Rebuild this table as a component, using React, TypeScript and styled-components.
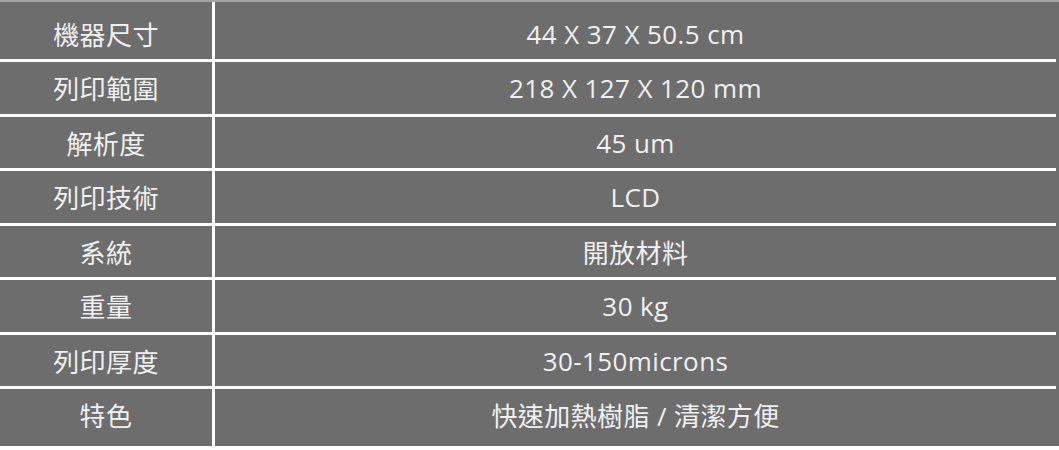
import React from "react";
import styled, { createGlobalStyle } from "styled-components";

const Global = createGlobalStyle`
  html, body { margin: 0; padding: 0; background: #ffffff; }
  body { font-family: "Open Sans", "Noto Sans CJK TC", sans-serif; }
`;

const Table = styled.div`
  display: flex;
  flex-direction: column;
  width: 1059px;
  box-sizing: border-box;
  background: #6d6d6d;
  border-top: 2px solid #a3a3a3;
  padding-right: 3px;
`;

const Row = styled.div<{ $h: number; $top: number; $bottom: number }>`
  display: grid;
  grid-template-columns: 212px 3px 1fr;
  height: ${(p) => p.$h}px;
  background: #6d6d6d;
  & > div:not(:nth-child(2)) {
    padding-top: ${(p) => p.$top}px;
    padding-bottom: ${(p) => p.$bottom}px;
  }
`;

const Separator = styled.div`
  height: 3px;
  background: #ffffff;
`;

const Divider = styled.div`
  background: #ffffff;
`;

const Cell = styled.div`
  display: flex;
  align-items: center;
  justify-content: center;
  color: #f0f0f0;
  font-size: 26px;
  letter-spacing: 0.4px;
  box-sizing: border-box;
  white-space: nowrap;
`;

const rows: [string, string][] = [
  ["機器尺寸", "44 X 37 X 50.5 cm"],
  ["列印範圍", "218 X 127 X 120 mm"],
  ["解析度", "45 um"],
  ["列印技術", "LCD"],
  ["系統", "開放材料"],
  ["重量", "30 kg"],
  ["列印厚度", "30-150microns"],
  ["特色", "快速加熱樹脂 / 清潔方便"],
];

const heights = [57, 52, 51, 52, 51, 52, 51, 57];
const tops = [7, 0, 0, 0, 0, 0, 0, 0];
const bottoms = [0, 0, 0, 0, 0, 0, 0, 6];

export default function App() {
  return (
    <>
      <Global />
      <Table>
        {rows.map(([k, v], i) => (
          <React.Fragment key={k}>
            {i > 0 && <Separator />}
            <Row $h={heights[i]} $top={tops[i]} $bottom={bottoms[i]}>
              <Cell>{k}</Cell>
              <Divider />
              <Cell>{v}</Cell>
            </Row>
          </React.Fragment>
        ))}
      </Table>
    </>
  );
}
